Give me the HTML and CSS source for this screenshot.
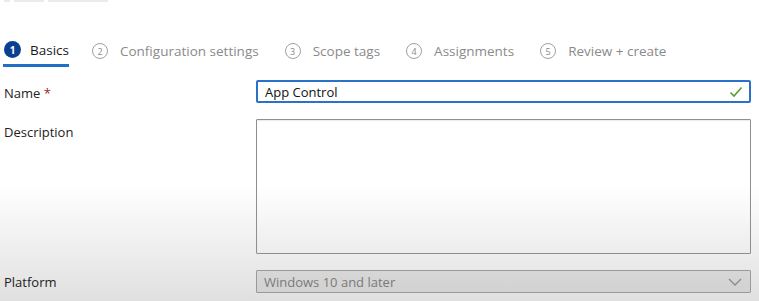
FILE: index.html
```html
<!DOCTYPE html>
<html>
<head>
<meta charset="utf-8">
<link rel="stylesheet" href="styles.css">
</head>
<body>
<div class="page">
  <div class="crumb"><span class="c1"></span><span class="c2"></span><span class="c3"></span></div>
  <nav class="steps">
    <div class="step active">
      <span class="num">1</span><span class="label">Basics</span>
    </div>
    <div class="step s2">
      <span class="num">2</span><span class="label">Configuration settings</span>
    </div>
    <div class="step">
      <span class="num">3</span><span class="label">Scope tags</span>
    </div>
    <div class="step">
      <span class="num">4</span><span class="label">Assignments</span>
    </div>
    <div class="step">
      <span class="num">5</span><span class="label">Review + create</span>
    </div>
  </nav>
  <div class="form">
    <div class="row row-name">
      <label class="lbl">Name <span class="req">*</span></label>
      <div class="field input focused">
        <span class="value">App Control</span>
        <svg class="check" width="14" height="12" viewBox="0 0 14 12"><path d="M1.5 6.5 L5 10 L12.5 1.5" fill="none" stroke="#5a9e3a" stroke-width="1.6"/></svg>
      </div>
    </div>
    <div class="row row-desc">
      <label class="lbl">Description</label>
      <div class="field textarea"></div>
    </div>
    <div class="row row-plat">
      <label class="lbl">Platform</label>
      <div class="field select">
        <span class="value muted">Windows 10 and later</span>
        <svg class="chev" width="14" height="8" viewBox="0 0 14 8"><path d="M1 1 L7 7 L13 1" fill="none" stroke="#8a8a8a" stroke-width="1.3"/></svg>
      </div>
    </div>
  </div>
</div>
</body>
</html>
```

FILE: styles.css
```css
html, body {
  margin: 0;
  padding: 0;
}
body {
  width: 759px;
  height: 301px;
  overflow: hidden;
  font-family: "Open Sans", "Noto Sans", sans-serif;
  font-size: 13px;
  color: #222;
  background: linear-gradient(to bottom, #ffffff 0px, #ffffff 185px, #e0e0e0 301px);
}
.page {
  padding: 0 8px 0 4px;
}
.crumb {
  display: flex;
  gap: 4px;
  height: 3px;
  padding-top: 0;
}
.crumb span {
  height: 2px;
  background: #ebebeb;
}
.c1 { width: 6px; }
.c2 { width: 30px; }
.c3 { width: 60px; }
.steps {
  display: flex;
  align-items: flex-end;
  margin-top: 37px;
  height: 27px;
}
.step {
  display: flex;
  align-items: center;
  height: 24px;
  margin-right: 26px;
  box-sizing: border-box;
  color: #8a8a8a;
  font-size: 13.5px;
  padding-bottom: 8px;
}
.step .num {
  width: 16px;
  height: 16px;
  border: 1.3px solid #a0a0a0;
  border-radius: 50%;
  box-sizing: border-box;
  display: flex;
  align-items: center;
  justify-content: center;
  font-size: 9px;
  color: #8a8a8a;
  margin-right: 12px;
}
.step.active {
  color: #1b1b1b;
  height: 27px;
  border-bottom: 3px solid #1f6fc5;
  padding-bottom: 5px;
  margin-left: -1px;
  padding-left: 1px;
  margin-right: 23px;
}
.step.active .num {
  width: 17px;
  height: 17px;
  border: none;
  background: #0b3f91;
  color: #fff;
  font-weight: 700;
  font-size: 10px;
  margin-right: 9px;
}
.form {
  margin-top: 13px;
}
.row {
  display: flex;
  align-items: flex-start;
}
.lbl {
  width: 252px;
  font-size: 13px;
  color: #222;
}
.req { color: #a4262c; }
.field {
  flex: none;
  width: 495px;
  box-sizing: border-box;
  display: flex;
  align-items: center;
  justify-content: space-between;
  padding: 0 6px 0 7px;
  font-size: 13px;
}
.row-name .lbl { padding-top: 4px; }
.input.focused {
  height: 23px;
  border: 2px solid #2a72c9;
  border-radius: 2px;
  background: #fff;
  color: #111;
}
.row-desc {
  margin-top: 16px;
}
.row-desc .lbl { padding-top: 4px; }
.textarea {
  height: 135px;
  border: 1px solid #8f8f8f;
  border-radius: 1px;
  background: transparent;
  box-shadow: inset 0 1px 1px rgba(0,0,0,0.08);
}
.row-plat {
  margin-top: 16px;
}
.row-plat .lbl { padding-top: 3px; }
.select {
  height: 23px;
  border: 1px solid #9a9a9a;
  border-radius: 1px;
  background: rgba(0,0,0,0.07);
}
.muted { color: #7a7a7a; }
.chev { margin-right: 2px; }
.check { margin-right: 0; }
```
